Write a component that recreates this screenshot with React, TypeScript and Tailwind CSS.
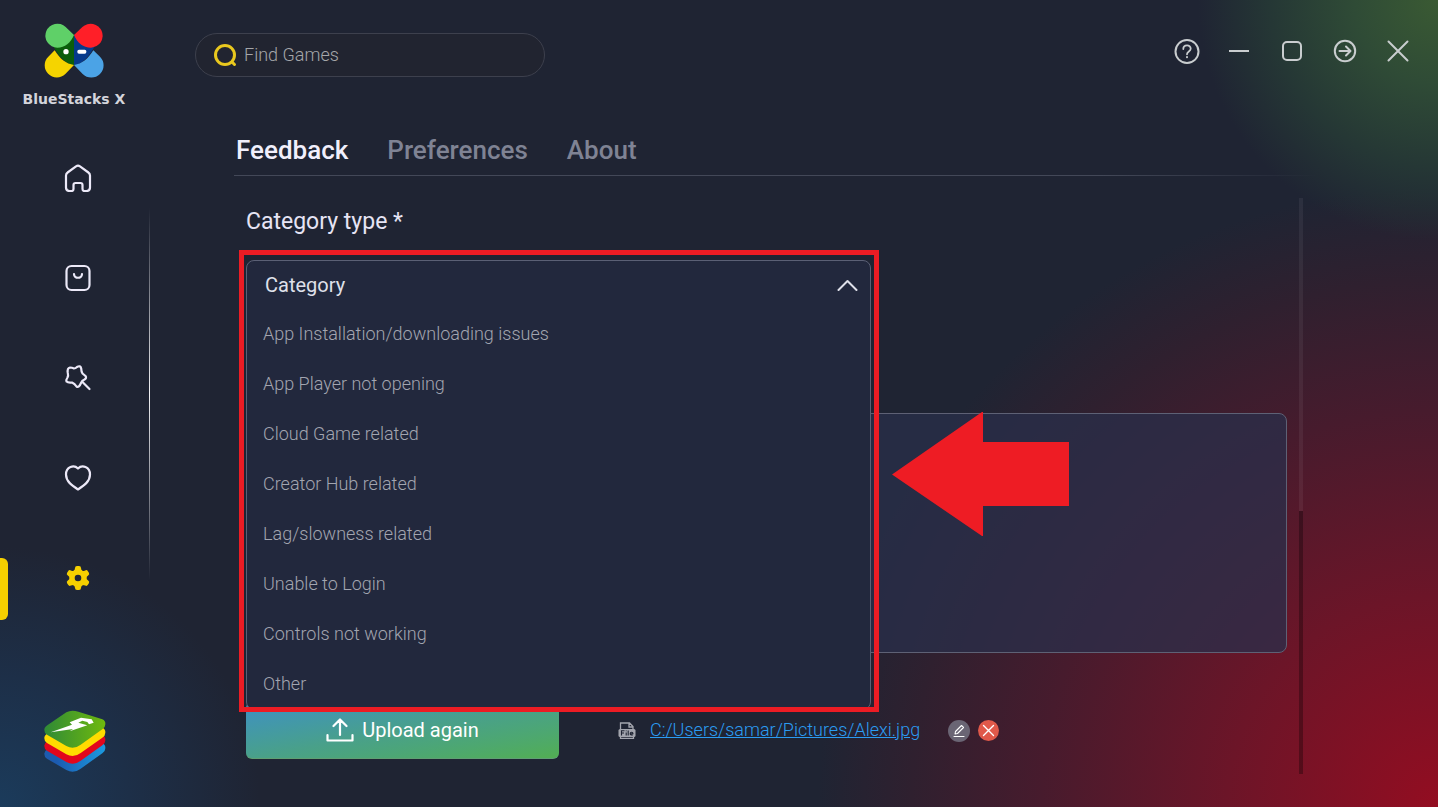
import React, { useState } from 'react';

const CATEGORIES = [
  'App Installation/downloading issues',
  'App Player not opening',
  'Cloud Game related',
  'Creator Hub related',
  'Lag/slowness related',
  'Unable to Login',
  'Controls not working',
  'Other',
];

const TABS = ['Feedback', 'Preferences', 'About'];

const stroke = {
  fill: 'none',
  stroke: 'currentColor',
  strokeLinecap: 'round' as const,
  strokeLinejoin: 'round' as const,
};

const BrandLogo: React.FC = () => (
  <svg width="60" height="55" viewBox="132 70 180 165" aria-hidden="true">
    <path d="M222 104 L160 140 Q188 193 222 196Z" fill="#0b5e0c" />
    <path d="M222 104 L284 140 Q256 193 222 196Z" fill="#053a8c" />
    <path d="M145 171 L164 152 C180 178 198 193 222 196 L196 223 A36 36 0 0 1 145 171Z" fill="#f5d400" />
    <path d="M300 171 L280 152 C264 178 246 193 222 196 L248 223 A36 36 0 0 0 300 171Z" fill="#4ba3e6" />
    <path d="M197 82 L222 106 C212 130 195 144 172 144 A36 36 0 1 1 197 82Z" fill="#5fd068" />
    <path d="M247 82 L222 106 C232 130 249 144 273 144 A36 36 0 1 0 247 82Z" fill="#ff1f28" />
    <circle cx="198" cy="156" r="8" fill="#fff" />
    <rect x="232" y="150" width="27" height="12" rx="5" fill="#fff" />
  </svg>
);

const LAYER =
  'M74 120 Q73 112 84 105 L140 67 Q155 58 176 65 L248 88 Q258 92 257 103 Q257 112 248 118 L183 164 Q162 180 140 168 L82 134 Q74 130 74 120Z';

const StackLogo: React.FC = () => (
  <svg width="64" height="64" viewBox="70 57 192 192" aria-hidden="true">
    <defs>
      <linearGradient id="top" x1="0" y1="0" x2="1" y2="0">
        <stop offset="0" stopColor="#2f8a36" />
        <stop offset="1" stopColor="#6fb90e" />
      </linearGradient>
      <linearGradient id="base" x1="0" y1="0" x2="1" y2="0">
        <stop offset="0.2" stopColor="#1c5bb0" />
        <stop offset="1" stopColor="#1b9ae0" />
      </linearGradient>
    </defs>
    <path d={LAYER} transform="translate(0 72)" fill="url(#base)" />
    <path d={LAYER} transform="translate(0 48)" fill="#e2061c" />
    <path d={LAYER} transform="translate(0 25)" fill="#ffdc00" />
    <path d={LAYER} fill="url(#top)" />
    <path
      d="M93 127 L157 104 L150 97 L184 83 L216 88 L222 98 L208 103 L203 96 L188 92 L176 98 L203 106 L150 124 L160 117Z"
      fill="#fff"
    />
  </svg>
);

const NAV = [
  {
    label: 'Home',
    icon: (
      <path d="M2 11.500 Q2 9.600 3.600 8.500 L12 2.400 Q14 1 16 2.400 L24.400 8.500 Q26 9.600 26 11.500 V23.500 Q26 27 22.500 27 H20.500 Q18.500 27 18.500 25 V21 Q18.500 19 16.500 19 H11.500 Q9.500 19 9.500 21 V25 Q9.500 27 7.500 27 H5.500 Q2 27 2 23.500Z" />
    ),
  },
  {
    label: 'Store',
    icon: (
      <>
        <rect x="2.500" y="2" width="23" height="24" rx="5" />
        <path d="M10 10 C10 15 18 15 18 10" />
      </>
    ),
  },
  {
    label: 'Discover',
    icon: (
      <>
        <path d="M6 3.500 Q8 3.500 10 4.500 Q11.500 4.500 13 3 Q16.500 1 17.200 4.500 Q17.300 7.500 18.500 9.500 L21.500 12 Q23 14 20.500 15.500 Q18 16.500 17 19 Q15 24 12.500 22.500 Q10.800 19.800 8 18.500 Q4 19 2.500 17.500 Q1.800 16 3.500 13.500 Q4.500 11.500 3.800 9 Q3 4 6 3.500Z" />
        <path d="M18.500 18 L25.500 25" />
      </>
    ),
  },
  {
    label: 'Favourites',
    icon: (
      <path d="M14 25.500 C8 21.500 2 17.500 2 10.500 C2 2.500 10 0.500 14 4.500 C18 0.500 26 2.500 26 10.500 C26 17.500 20 21.500 14 25.500Z" />
    ),
  },
];

const TOOTH_ANGLES = [0, 60, 120, 180, 240, 300];

const GearIcon: React.FC = () => (
  <svg width="28" height="28" viewBox="0 0 28 28" aria-hidden="true">
    <g fill="#f5d000">
      {TOOTH_ANGLES.map((angle) => (
        <path key={angle} d="M9 8 Q11 6.500 11 4 Q11 2 13 2 H15 Q17 2 17 4 Q17 6.500 19 8Z" transform={`rotate(${angle} 14 14)`} />
      ))}
    </g>
    <circle cx="14" cy="14" r="6" fill="none" stroke="#f5d000" strokeWidth="5.400" />
  </svg>
);

const Sidebar: React.FC = () => (
  <aside className="flex w-[150px] shrink-0 flex-col">
    <div className="flex flex-col items-center pt-[23px] pr-0.5">
      <BrandLogo />
      <span className="mt-[13px] whitespace-nowrap font-['DejaVu_Sans',sans-serif] text-[14px] leading-4 font-bold text-[#d3d4db]">
        BlueStacks X
      </span>
    </div>
    <div className="mt-[21px] flex">
      <nav className="flex flex-1 flex-col text-[#ece9f8]">
        {NAV.map((item) => (
          <a key={item.label} href="#" aria-label={item.label} className="flex h-[100px] items-center justify-center pl-[7px]">
            <svg width="28" height="28" viewBox="0 0 28 28" strokeWidth="2.200" {...stroke} aria-hidden="true">
              {item.icon}
            </svg>
          </a>
        ))}
        <a href="#" aria-label="Settings" className="relative flex h-[100px] items-center justify-center pl-[7px]">
          <span className="absolute top-[30px] left-0 h-[62px] w-2 rounded-r-md bg-[#f5d000]" />
          <GearIcon />
        </a>
      </nav>
      <div className="mt-20 mb-12 w-px bg-linear-to-b from-transparent via-[#f2f2f5] to-transparent" />
    </div>
    <div className="mt-auto flex justify-center pb-[34px]">
      <StackLogo />
    </div>
  </aside>
);

const WindowControls: React.FC = () => (
  <div className="flex items-center gap-[25px] pb-2 text-[#c9cdcf]">
    <button aria-label="Help" className="flex size-7 items-center justify-center">
      <svg width="28" height="28" viewBox="0 0 28 28" strokeWidth="2" {...stroke}>
        <circle cx="15" cy="14.500" r="11.500" />
        <path d="M11.300 12 C11.300 7.300 18.800 7.300 18.700 11.800 C18.500 14.500 15 14.500 15 17.300" strokeWidth="1.800" />
        <path d="M15 20 V20.200" />
      </svg>
    </button>
    <button aria-label="Minimize" className="flex size-7 items-center justify-center">
      <span className="h-0.5 w-5 bg-current" />
    </button>
    <button aria-label="Maximize" className="flex size-7 items-center justify-center">
      <span className="size-5 rounded-[5px] border-2 border-current" />
    </button>
    <button aria-label="Go to player" className="flex size-7 items-center justify-center">
      <svg width="24" height="24" viewBox="0 0 24 24" strokeWidth="2" {...stroke}>
        <circle cx="12" cy="12" r="10.200" />
        <path d="M6.500 12 H17 M13 7.500 L17.500 12 L13 16.500" />
      </svg>
    </button>
    <button aria-label="Close" className="flex size-7 items-center justify-center">
      <svg width="24" height="24" viewBox="0 0 24 24" strokeWidth="2" {...stroke}>
        <path d="M2.500 2.500 L21.500 21.500 M21.500 2.500 L2.500 21.500" />
      </svg>
    </button>
  </div>
);

const CategorySelect: React.FC = () => {
  const [open, setOpen] = useState(true);
  const [selected, setSelected] = useState('Category');

  return (
    <div className="absolute inset-x-0 top-0 z-10 rounded-lg border border-[#5b6075] bg-[#22283d]">
      <button
        id="category"
        aria-haspopup="listbox"
        aria-expanded={open}
        onClick={() => setOpen(!open)}
        className="flex h-12 w-full items-center justify-between pr-3 pl-[18px] text-[20px] leading-6 text-[#dfe0ea]"
      >
        {selected}
        <svg width="21" height="12" viewBox="0 0 21 12" strokeWidth="2" {...stroke} className={open ? '' : 'rotate-180'}>
          <path d="M1.500 11 L10.500 2 L19.500 11" />
        </svg>
      </button>
      {open && (
        <ul role="listbox" aria-labelledby="category-label">
          {CATEGORIES.map((name) => (
            <li
              key={name}
              role="option"
              aria-selected={name === selected}
              onClick={() => setSelected(name)}
              className="flex h-[50px] cursor-pointer items-center pl-4 text-[18px] leading-6 font-light text-[#a2a5b0]"
            >
              {name}
            </li>
          ))}
        </ul>
      )}

      {/* Callout frame and arrow */}
      <div className="pointer-events-none absolute -top-[11px] -right-[9px] -bottom-[3px] -left-2 border-[5px] border-[#ec1c24]" />
      <svg
        width="178"
        height="125"
        viewBox="0 0 178 125"
        className="pointer-events-none absolute top-[151px] left-full ml-[22px]"
        aria-hidden="true"
      >
        <path d="M0 62.500 L90 0 H91 V30 H177 V94 H91 V124 H90Z" fill="#ee1c24" />
      </svg>
    </div>
  );
};

const FileRow: React.FC = () => (
  <div className="mt-[49px] flex items-center">
    <button className="flex h-[57px] w-[313px] items-center justify-center gap-2 rounded-md border-b border-[#5f9f73] bg-linear-to-br from-[#408fc4] via-[#49a08a] to-[#52ae52] text-[20px] leading-6 text-white">
      <svg width="28" height="24" viewBox="0 0 28 24" strokeWidth="2.200" {...stroke} aria-hidden="true">
        <path d="M14 17 V2 M7.500 8 L14 1.500 L20.500 8 M1.500 17 V22.500 H26.500 V17" />
      </svg>
      Upload again
    </button>
    <svg width="18" height="18" viewBox="0 0 18 18" className="ml-[59px] shrink-0" aria-hidden="true">
      <path d="M2.500 7 V1 H11.500 L15 4.500 V7 M11 1 V5 H15" fill="none" stroke="#a3a5ae" strokeWidth="1.300" />
      <rect x="0.500" y="7" width="17" height="8" rx="1.500" fill="#a3a5ae" />
      <path d="M2.500 15 V16.400 H15.500 V15" fill="none" stroke="#a3a5ae" strokeWidth="1.300" />
      <path d="M3.500 13.500 V8.800 H6.500 M3.500 11 H6 M8.200 10.500 V13.500 M8.200 8.500 V9.300 M10.200 8.500 V13.500 M12.200 11.800 H15 Q15 10.300 13.600 10.300 Q12.200 10.300 12.200 11.800 Q12.200 13.300 14.800 13" fill="none" stroke="#1f2433" strokeWidth="1.100" />
    </svg>
    <a href="#" className="ml-3.5 pb-0.5 text-[18px] leading-6 font-light text-[#2b9cf2] underline">
      C:/Users/samar/Pictures/Alexi.jpg
    </a>
    <button aria-label="Edit file" className="ml-7 flex size-[22px] items-center justify-center rounded-full bg-[#6a6574] text-white">
      <svg width="14" height="14" viewBox="0 0 14 14" strokeWidth="1.100" {...stroke}>
        <path d="M3 10 L3.500 7.500 L9.500 1.500 L11.500 3.500 L5.500 9.500Z M2 12.500 H12" />
      </svg>
    </button>
    <button aria-label="Remove file" className="ml-2 flex size-[21px] items-center justify-center rounded-full bg-[#e0594a] text-white">
      <svg width="13" height="13" viewBox="0 0 13 13" strokeWidth="1.400" {...stroke}>
        <path d="M1.500 1.500 L11.500 11.500 M11.500 1.500 L1.500 11.500" />
      </svg>
    </button>
  </div>
);

export default function App() {
  const [tab, setTab] = useState('Feedback');

  return (
    <div className="flex min-h-screen bg-[#1f2433] bg-[radial-gradient(circle_260px_at_0%_100%,#1b3b5b_0%,#1d2f48_50%,transparent_100%),radial-gradient(circle_240px_at_100%_0%,#3a5a33_0%,#2f4b36_35%,#253735_70%,transparent_100%),radial-gradient(circle_620px_at_100%_100%,#930d21_0%,#6c1528_34%,#471b2d_64%,#2f202f_85%,transparent_100%)] font-[Roboto,sans-serif]">
      <Sidebar />

      <main className="flex min-w-0 flex-1 flex-col">
        <header className="flex items-center justify-between pt-[33px] pr-[26px] pl-[45px]">
          <label className="flex h-11 w-[350px] items-center gap-1.5 rounded-full border border-[#3d404d] bg-[#212430] pl-[18px]">
            <svg width="24" height="24" viewBox="0 0 24 24" fill="none" stroke="#e9c81e" strokeWidth="3" strokeLinecap="round" aria-hidden="true">
              <circle cx="11" cy="12" r="9.500" />
              <path d="M18 19 L20.500 21.500" />
            </svg>
            <input
              type="text"
              aria-label="Find Games"
              placeholder="Find Games"
              className="min-w-0 flex-1 bg-transparent text-[18px] leading-6 font-light text-white outline-none placeholder:text-[#a5a6aa]"
            />
          </label>
          <WindowControls />
        </header>

        <div className="mt-[57px] mr-[120px] ml-[84px]">
          <div role="tablist" className="flex gap-[39px] pl-0.5">
            {TABS.map((name) => (
              <button
                key={name}
                role="tab"
                aria-selected={tab === name}
                onClick={() => setTab(name)}
                className={`pb-[9px] text-[26px] leading-8 font-medium ${tab === name ? 'text-[#f1effc]' : 'text-[#7f8394]'}`}
              >
                {name}
              </button>
            ))}
          </div>
          <div className="h-px bg-linear-to-r from-[#434858] from-80% to-transparent" />
        </div>

        <div className="mt-[22px] mr-[135px] ml-24 flex flex-1 justify-between gap-3">
          <section className="mb-12 flex-1 pt-[9px]">
            <label id="category-label" htmlFor="category" className="block text-[23px] leading-[30px] text-[#e6e4f5]">
              Category type *
            </label>
            <div className="relative mt-[23px] h-12 w-3/5">
              <CategorySelect />
            </div>
            <textarea
              aria-label="Description"
              className="mt-[105px] block h-60 w-full resize-none rounded-lg border border-[#5e6175] bg-[#2a2f4b]/75"
            />
            <FileRow />
          </section>
          <div className="mb-[33px] flex w-1 flex-col">
            <div className="flex-[313] bg-white/6" />
            <div className="flex-[263] bg-black/30" />
          </div>
        </div>
      </main>
    </div>
  );
}
